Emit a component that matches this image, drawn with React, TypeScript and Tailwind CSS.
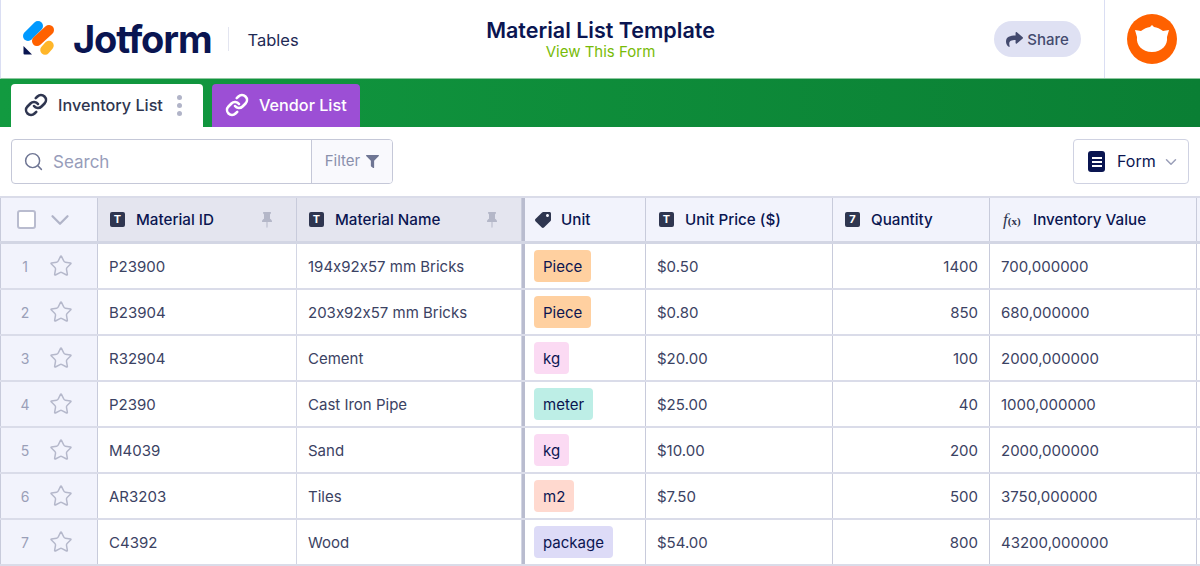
import { FaTag, FaFilter, FaShare } from "react-icons/fa";
import { Search, ChevronDown, Link, Star } from "lucide-react";
import { BsPinFill } from "react-icons/bs";

type Row = {
  id: string;
  name: string;
  unit: string;
  price: string;
  qty: string;
  value: string;
};

const rows: Row[] = [
  { id: "P23900", name: "194x92x57 mm Bricks", unit: "Piece", price: "$0.50", qty: "1400", value: "700,000000" },
  { id: "B23904", name: "203x92x57 mm Bricks", unit: "Piece", price: "$0.80", qty: "850", value: "680,000000" },
  { id: "R32904", name: "Cement", unit: "kg", price: "$20.00", qty: "100", value: "2000,000000" },
  { id: "P2390", name: "Cast Iron Pipe", unit: "meter", price: "$25.00", qty: "40", value: "1000,000000" },
  { id: "M4039", name: "Sand", unit: "kg", price: "$10.00", qty: "200", value: "2000,000000" },
  { id: "AR3203", name: "Tiles", unit: "m2", price: "$7.50", qty: "500", value: "3750,000000" },
  { id: "C4392", name: "Wood", unit: "package", price: "$54.00", qty: "800", value: "43200,000000" },
];

const unitColors: Record<string, string> = {
  Piece: "bg-[#ffd0a0]",
  kg: "bg-[#fbdaf3]",
  meter: "bg-[#bdeee6]",
  m2: "bg-[#ffd9cf]",
  package: "bg-[#dddbf7]",
};

const gridCols = "grid grid-cols-[98px_199px_225px_3px_121px_187px_157px_207px_3px]";

function TypeIcon({ label }: { label: string }) {
  return (
    <span className="w-[15px] h-[15px] rounded-[2px] bg-[#2f3650] text-white text-[11px] font-bold flex items-center justify-center shrink-0">
      {label}
    </span>
  );
}

function HeaderCell({
  icon,
  title,
  pinned,
  pad = "pl-[13px]",
  iconWidth = "w-[26px]",
}: {
  icon: React.ReactNode;
  title: string;
  pinned?: boolean;
  pad?: string;
  iconWidth?: string;
}) {
  return (
    <div
      className={`flex items-center ${pad} pr-[21px] border-r border-[#c8cbdb] ${
        pinned ? "bg-[#e4e5ef]" : "bg-[#f2f3fc]"
      }`}
    >
      <span className={`${iconWidth} shrink-0 flex items-center`}>{icon}</span>
      <span className="text-[15.2px] font-medium text-[#0a1551] whitespace-nowrap pt-[2px]">{title}</span>
      {pinned && <BsPinFill className="ml-auto text-[#b4b7c8] text-[16px]" />}
    </div>
  );
}

export default function App() {
  return (
    <div className="w-[1200px] h-[566px] overflow-hidden bg-white font-['Inter','Liberation_Sans',sans-serif] [font-feature-settings:'calt'_0]">
      {/* Top header */}
      <header className="h-[79px] flex items-center border-l border-b border-l-[#dadef3] border-b-[#8fc7a0] relative">
        <div className="flex items-center pl-[21px]">
          <svg width="34" height="36" viewBox="0 0 34 36" className="shrink-0">
            <line x1="6" y1="15" x2="16" y2="5" stroke="#0099ff" strokeWidth="10" strokeLinecap="round" />
            <line x1="15" y1="20" x2="27" y2="9" stroke="#ff6100" strokeWidth="10" strokeLinecap="round" />
            <line x1="23" y1="29" x2="27" y2="24.5" stroke="#ffb629" strokeWidth="9.5" strokeLinecap="round" />
            <path d="M1.5 25 L10 33.5 H2.5 A1 1 0 0 1 1.5 32.5 Z" fill="#0a1551" />
          </svg>
          <span className="ml-[17px] text-[38px] font-bold tracking-[-1.1px] text-[#0a1551] leading-none">Jotform</span>
          <span className="ml-[16px] w-px h-[24px] bg-[#e3e5f0]" />
          <span className="ml-[19px] text-[16.5px] pt-[2px] text-[#1e2a55]">Tables</span>
        </div>
        <div className="absolute left-0 right-0 top-[15px] flex flex-col items-center">
          <div className="text-[21.5px] font-semibold leading-[30px] text-[#0a1551]">Material List Template</div>
          <div className="text-[15px] leading-[14px] text-[#78bb07]">View This Form</div>
        </div>
        <div className="ml-auto flex items-center h-full relative">
          <button className="flex items-center gap-[4px] h-[36px] w-[87px] justify-center rounded-full bg-[#dfe1f3] text-[#434a6e] text-[15px] font-medium mr-[23px]">
            <FaShare className="text-[17px]" />
            <span className="pt-[3px]">Share</span>
          </button>
          <div className="w-[96px] h-full border-l border-[#dadef3] flex items-center justify-center pr-[1px]">
            <svg width="50" height="50" viewBox="0 0 50 50">
              <circle cx="25" cy="25" r="25" fill="#ff6100" />
              <path
                d="M8 16 L14 17 C17 14.5 20 13.5 23 13 L25 11 L27 13 C30 13.5 33 14.5 36 17 L42 16 L40 23 C41 31 35 38 25 38 C15 38 9 31 10 23 Z"
                fill="#fff"
              />
            </svg>
          </div>
        </div>
      </header>

      {/* Tabs */}
      <div className="h-[48px] bg-gradient-to-r from-[#129a40] to-[#0a7f34] flex items-end pl-[11px] gap-[9px]">
        <div className="h-[43px] w-[192px] bg-white rounded-t-[4px] flex items-center pl-[13px] pb-[1px] text-[#2f3650]">
          <Link className="w-[24px] h-[24px]" strokeWidth={2.6} />
          <span className="ml-[10px] text-[16.2px] font-medium whitespace-nowrap">Inventory List</span>
          <span className="ml-[14px] flex flex-col gap-[3px]">
            <span className="w-[5px] h-[5px] rounded-full bg-[#b1b4c8]" />
            <span className="w-[5px] h-[5px] rounded-full bg-[#b1b4c8]" />
            <span className="w-[5px] h-[5px] rounded-full bg-[#b1b4c8]" />
          </span>
        </div>
        <div className="h-[43px] w-[148px] bg-[#9c4fd5] rounded-t-[4px] flex items-center pl-[13px] pb-[1px] text-white">
          <Link className="w-[24px] h-[24px]" strokeWidth={2.6} />
          <span className="ml-[10px] text-[16.2px] font-medium whitespace-nowrap">Vendor List</span>
        </div>
      </div>

      {/* Toolbar */}
      <div className="h-[70px] flex items-center justify-between pl-[11px] pr-[11px] pb-[1px]">
        <div className="flex h-[45px] w-[382px] border border-[#c5c8d8] rounded-[4px] overflow-hidden">
          <div className="flex-1 flex items-center pl-[11px] gap-[9px] text-[#979dba]">
            <Search className="w-[21px] h-[21px] text-[#6f7694]" strokeWidth={1.7} />
            <span className="text-[17px] pt-[3px]">Search</span>
          </div>
          <div className="w-[81px] border-l border-[#c5c8d8] bg-[#f9f9fd] flex items-center justify-center gap-[6px] text-[#8a90ac]">
            <span className="text-[15px]">Filter</span>
            <FaFilter className="text-[13px] text-[#6f7694]" />
          </div>
        </div>
        <div className="flex items-center h-[45px] w-[116px] border border-[#cfd2e2] rounded-[4px] pl-[14px]">
          <span className="w-[17px] h-[21px] rounded-[3px] bg-[#0a1551] flex flex-col items-center justify-center gap-[2px] shrink-0">
            <span className="w-[10px] h-[2px] bg-white" />
            <span className="w-[10px] h-[2px] bg-white" />
            <span className="w-[10px] h-[2px] bg-white" />
          </span>
          <span className="ml-[12px] text-[16px] text-[#0a1551] pb-[2px]">Form</span>
          <ChevronDown className="ml-[6px] w-[18px] h-[18px] text-[#9a9fb8]" />
        </div>
      </div>

      {/* Table */}
      <div className="-mt-[1px] border-t-2 border-[#dadce9]">
        <div className={`${gridCols} h-[46px] border-b-[3px] border-[#d3d6e4]`}>
          <div className="bg-[#f2f3fc] border-l border-r border-[#c8cbdb] flex items-center pl-[16px]">
            <span className="w-[19px] h-[19px] rounded-[3px] border-2 border-[#b9bccf] bg-white" />
            <ChevronDown className="ml-[9px] w-[30px] h-[30px] text-[#b1b4c8]" strokeWidth={1.8} />
          </div>
          <HeaderCell icon={<TypeIcon label="T" />} title="Material ID" pinned pad="pl-[12px]" />
          <HeaderCell icon={<TypeIcon label="T" />} title="Material Name" pinned pad="pl-[12px]" />
          <div className="bg-[#b9bccf]" />
          <HeaderCell icon={<FaTag className="text-[16px] text-[#2f3650] -scale-x-100" />} title="Unit" pad="pl-[10px]" />
          <HeaderCell icon={<TypeIcon label="T" />} title="Unit Price ($)" />
          <HeaderCell icon={<TypeIcon label="7" />} title="Quantity" pad="pl-[12px]" />
          <HeaderCell
            icon={
              <span className="font-['Liberation_Serif',serif] italic text-[17px] text-[#2f3650] whitespace-nowrap">
                f<span className="not-italic text-[11px] font-bold">(x)</span>
              </span>
            }
            title="Inventory Value"
            iconWidth="w-[30px]"
          />
          <div className="bg-[#f2f3fc]" />
        </div>
        {rows.map((row, i) => (
          <div key={row.id} className={`${gridCols} h-[46px] border-b-2 border-[#dadce9] text-[15px] text-[#3b4263]`}>
            <div className="bg-[#f2f3fc] border-l border-r border-[#c8cbdb] flex items-center">
              <span className="w-[48px] text-center text-[14px] text-[#9a9fb8]">{i + 1}</span>
              <Star className="w-[24px] h-[24px] text-[#b5b8cb]" strokeWidth={1.5} />
            </div>
            <div className="border-r border-[#d3d6e4] flex items-center pl-[11px] pt-[2px]">{row.id}</div>
            <div className="border-r border-[#d3d6e4] flex items-center pl-[11px] pt-[2px] whitespace-nowrap">{row.name}</div>
            <div className="bg-[#b9bccf]" />
            <div className="border-r border-[#c8cbdb] flex items-center pl-[9px]">
              <span className={`${unitColors[row.unit]} h-[32px] px-[9px] rounded-[4px] flex items-center pt-[2px] text-[#0a1551]`}>
                {row.unit}
              </span>
            </div>
            <div className="border-r border-[#c8cbdb] flex items-center pl-[11px] pt-[2px]">{row.price}</div>
            <div className="border-r border-[#c8cbdb] flex items-center justify-end pr-[11px] pt-[2px]">{row.qty}</div>
            <div className="border-r border-[#c8cbdb] flex items-center pl-[11px] pt-[2px]">{row.value}</div>
            <div />
          </div>
        ))}
      </div>
    </div>
  );
}
